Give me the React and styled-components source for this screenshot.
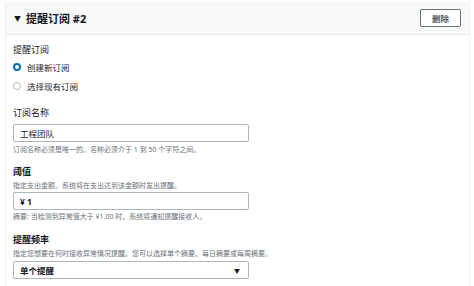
import React from 'react'
import styled, { createGlobalStyle } from 'styled-components'

const Global = createGlobalStyle`
  body {
    margin: 0;
    background: #fff;
    font-family: "Noto Sans", "Noto Sans CJK SC", sans-serif;
    color: #16191f;
  }
`

const Panel = styled.section`
  margin: 2px 4px 0 5px;
  background: #fff;
  border-left: 1px solid #eef0f0;
  border-right: 1px solid #eef0f0;
`

const Header = styled.header`
  height: 32px;
  display: flex;
  align-items: center;
  justify-content: space-between;
  padding: 0 8px 0 8px;
  background: #f7f8f8;
  border-bottom: 1px solid #e6e9e9;
`

const Title = styled.h2`
  margin: 0;
  display: flex;
  align-items: center;
  gap: 5px;
  font-size: 11px;
  font-weight: 700;
  color: #16191f;
`

const Caret = styled.span`
  font-size: 7px;
  line-height: 1;
`

const DeleteButton = styled.button`
  width: 41px;
  height: 18px;
  padding: 0;
  background: #fff;
  border: 1px solid #687078;
  border-radius: 2px;
  font-family: inherit;
  font-size: 8.5px;
  font-weight: 700;
  color: #545b64;
`

const Body = styled.div`
  padding: 8px 7px 10px;
`

const Field = styled.div`
  margin-top: ${p => p.$gap || 0}px;
`

const Label = styled.div`
  font-size: 9px;
  line-height: 14px;
  font-weight: ${p => (p.$bold ? 700 : 400)};
  color: #16191f;
`

const Hint = styled.div`
  font-size: 7px;
  line-height: 12px;
  color: #687078;
  margin-top: ${p => p.$gap || 0}px;
  white-space: nowrap;
`

const RadioRow = styled.label`
  height: 19px;
  display: flex;
  align-items: center;
  gap: 6px;
  font-size: 8.5px;
  color: #16191f;
`

const RadioDot = styled.span`
  box-sizing: border-box;
  width: 8px;
  height: 8px;
  border-radius: 50%;
  background: #fff;
  border: ${p => (p.$checked ? '2.5px solid #0073bb' : '1px solid #aab7b8')};
`

const Input = styled.div`
  box-sizing: border-box;
  width: 236px;
  height: 18px;
  margin-top: ${p => p.$gap || 0}px;
  display: flex;
  align-items: center;
  justify-content: space-between;
  padding: 0 8px 0 6px;
  border: 1px solid #aab7b8;
  border-radius: 2px;
  background: #fff;
  font-size: 8.5px;
  font-weight: ${p => (p.$bold ? 700 : 400)};
  color: #16191f;
`

const Arrow = styled.span`
  font-size: 6px;
  color: #16191f;
`

export default function App() {
  return (
    <>
      <Global />
      <Panel>
        <Header>
          <Title>
            <Caret>▼</Caret>
            提醒订阅 #2
          </Title>
          <DeleteButton>删除</DeleteButton>
        </Header>
        <Body>
          <Label>提醒订阅</Label>
          <RadioRow>
            <RadioDot $checked />
            创建新订阅
          </RadioRow>
          <RadioRow>
            <RadioDot />
            选择现有订阅
          </RadioRow>

          <Field $gap={11}>
            <Label>订阅名称</Label>
            <Input $gap={4}>工程团队</Input>
            <Hint $gap={2}>订阅名称必须是唯一的。名称必须介于 1 到 50 个字符之间。</Hint>
          </Field>

          <Field $gap={9}>
            <Label $bold>阈值</Label>
            <Hint $gap={1}>指定支出金额。系统将在支出达到该金额时发出提醒。</Hint>
            <Input $bold>¥ 1</Input>
            <Hint $gap={1}>摘要: 当检测到异常值大于 ¥1.00 时，系统将通知提醒接收人。</Hint>
          </Field>

          <Field $gap={10}>
            <Label $bold>提醒频率</Label>
            <Hint $gap={1}>指定您想要在何时接收异常情况提醒。您可以选择单个摘要、每日摘要或每周摘要。</Hint>
            <Input $bold $gap={1}>
              单个提醒
              <Arrow>▼</Arrow>
            </Input>
          </Field>
        </Body>
      </Panel>
    </>
  )
}
